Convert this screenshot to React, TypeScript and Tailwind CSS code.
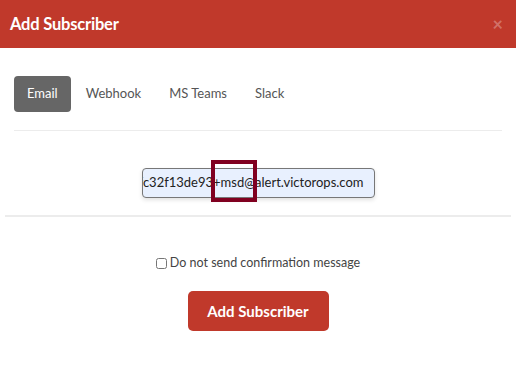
import { useState } from "react";

const tabs = ["Email", "Webhook", "MS Teams", "Slack"];

export default function App() {
  const [active, setActive] = useState("Email");
  const [skipConfirm, setSkipConfirm] = useState(false);

  return (
    <div className="w-[516px] h-[377px] bg-white font-['Lato','Liberation_Sans',sans-serif] text-[#333]">
      {/* header */}
      <div className="h-[48px] bg-[#c0392b] flex items-center justify-between pl-[10px] pr-[13px]">
        <h2 className="text-white font-bold text-[16.5px] tracking-[-0.2px]">Add Subscriber</h2>
        <button className="text-white/30 text-[18px] font-bold leading-none">×</button>
      </div>

      {/* tabs */}
      <div className="px-[14px] pt-[28px]">
        <div className="flex items-center pb-[18px] border-b border-[#ececec]">
          {tabs.map((t) => (
            <button
              key={t}
              onClick={() => setActive(t)}
              className={
                t === active
                  ? "h-[36px] px-[13px] rounded-[4px] bg-[#666] text-white text-[13px] mr-[1px]"
                  : "h-[36px] px-[14px] rounded-[4px] text-[#555] text-[13px]"
              }
            >
              {t}
            </button>
          ))}
        </div>
      </div>

      {/* email field */}
      <div className="mx-[5px] h-[86px] border-b-2 border-[#ececec] flex justify-center pt-[37px]">
        <div className="relative">
          <div className="w-[233px] h-[30px] bg-[#e8f0fe] border border-[#777] rounded-[4px] shadow-[0_2px_4px_rgba(0,0,0,0.12)] overflow-hidden flex justify-end items-center pr-[10px]">
            <span className="whitespace-nowrap text-[13px] text-[#222]">
              2fc32f13de93+msd@alert.victorops.com
            </span>
          </div>
          <div className="absolute left-[69px] top-[-8px] w-[46px] h-[42px] border-[4px] border-[#800020]" />
        </div>
      </div>

      {/* confirm checkbox */}
      <div className="flex justify-center pt-[37px]">
        <label className="flex items-center gap-[3px] text-[12.5px] text-[#444] cursor-pointer">
          <input
            type="checkbox"
            checked={skipConfirm}
            onChange={(e) => setSkipConfirm(e.target.checked)}
            className="w-[11px] h-[11px] m-0"
          />
          Do not send confirmation message
        </label>
      </div>

      {/* submit */}
      <div className="flex justify-center pt-[18px]">
        <button className="w-[141px] h-[40px] rounded-[5px] bg-[#c0392b] text-white font-bold text-[15px]">
          Add Subscriber
        </button>
      </div>
    </div>
  );
}
